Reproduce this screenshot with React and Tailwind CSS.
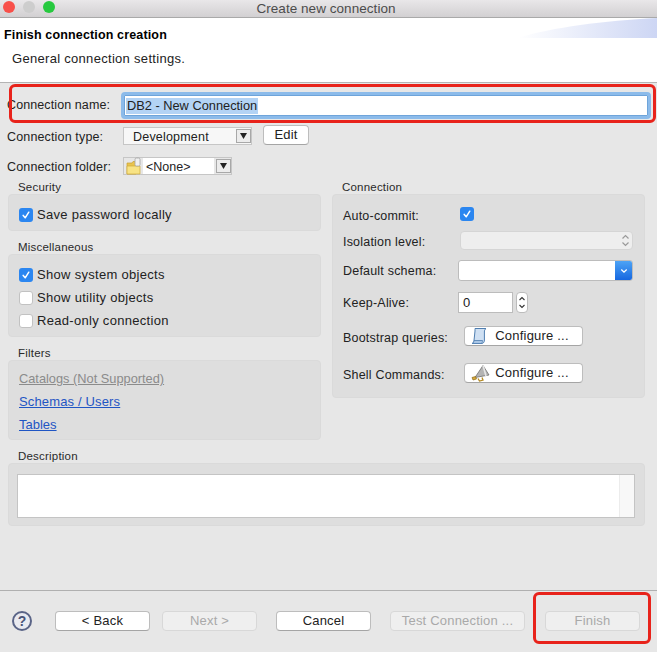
import React from "react";

function Check({ on }) {
  return on ? (
    <span className="w-[14px] h-[14px] shrink-0 rounded-[3px] bg-[#2b86f0] flex items-center justify-center">
      <svg width="10" height="10" viewBox="0 0 10 10" fill="none" stroke="#fff" strokeWidth="1.5" strokeLinecap="round" strokeLinejoin="round">
        <path d="M2.2 5.4 4.2 7.8 7.8 2.2" />
      </svg>
    </span>
  ) : (
    <span className="w-[14px] h-[14px] shrink-0 rounded-[3px] bg-white border border-[#c2c2c2]" />
  );
}

function ArrowBox() {
  return (
    <span className="w-[15px] h-[14px] border border-[#a8a8a8] bg-[#ececec] flex items-center justify-center">
      <svg width="7" height="6" viewBox="0 0 7 6">
        <path d="M0 0h7L3.5 6z" fill="#222" />
      </svg>
    </span>
  );
}

function Group({ title, className, children }) {
  return (
    <div className={className}>
      <div className="h-[14px] pl-[10px] text-[11.5px] leading-[14px] tracking-[0.2px] text-[#2a2a2a]">{title}</div>
      <div className="rounded-[4px] bg-[#dedede] border border-[#dadada]">{children}</div>
    </div>
  );
}

function CheckRow({ on, children }) {
  return (
    <div className="h-[23px] flex items-center gap-[4px] text-[13px] tracking-[0.3px] text-[#222]">
      <Check on={on} />
      <span>{children}</span>
    </div>
  );
}

function Btn({ children, off, className }) {
  return (
    <button
      className={
        "h-[20px] rounded-[4px] text-[13px] tracking-[0.2px] flex items-center justify-center " +
        (off
          ? "bg-[#efefef] border border-[#d8d8d8] text-[#a9a9a9] "
          : "bg-white border border-[#bdbdbd] border-b-[#a5a5a5] text-[#222] ") +
        className
      }
    >
      {children}
    </button>
  );
}

function ScrollIcon() {
  return (
    <svg width="17" height="18" viewBox="0 0 17 18" fill="none">
      <path d="M4 1.5h11c-1.3 1-1.6 2-1.6 3.5v8c0 1.6-.7 3-2 3.5H1.2c1.2-.7 1.7-1.6 1.8-3L4 4c0-1 0-2 0-2.500z" fill="#cfe0f3" stroke="#4f7eb0" strokeWidth="1" strokeLinejoin="round" />
      <path d="M1.2 16.500c1-.4 1.700-1.500 1.800-3h8.500c0 1.500-.3 2.500-1.200 3z" fill="#a9c6e6" stroke="#4f7eb0" strokeWidth=".8" />
    </svg>
  );
}

function HornIcon() {
  return (
    <svg width="20" height="18" viewBox="0 0 20 18" fill="none">
      <path d="M12 1.500 18 11 4 13.500z" fill="#b4b4b4" stroke="#6f6f6f" strokeWidth=".8" strokeLinejoin="round" />
      <path d="M12 1.500 15 12" stroke="#e6e6e6" strokeWidth="1.600" />
      <path d="M1 13.500 4.500 12.500 5.500 15 2 16z" fill="#d8a93a" stroke="#8d6a17" strokeWidth=".7" />
      <path d="M7 14.500 8.500 17 12 16 11 13.500" fill="none" stroke="#b58a22" strokeWidth="1.300" />
    </svg>
  );
}

function FolderIcon() {
  return (
    <svg width="16" height="18" viewBox="0 0 16 18" fill="none">
      <path d="M1 6h5l1-1.500h3V17H1z" fill="#e9c44e" stroke="#c9a233" strokeWidth=".7" />
      <path d="M1 9h13v8H1z" fill="#f8e384" stroke="#cfa93a" strokeWidth=".7" />
      <rect x="9" y="1" width="5" height="8" rx="1.500" fill="#f1f1f1" stroke="#a3a3a3" strokeWidth=".8" />
    </svg>
  );
}

export default function App() {
  return (
    <div className="relative w-[657px] h-[652px] flex flex-col overflow-hidden bg-[#e7e7e7] text-[13px] text-[#222] font-['Liberation_Sans',Arial,sans-serif]">
      {/* title bar */}
      <div className="relative h-[18px] shrink-0 flex items-center justify-center bg-gradient-to-b from-[#e9e7e9] to-[#d2d0d2] border-b border-[#a9a9a9]">
        <div className="absolute left-[3px] top-[1px] flex gap-[8px]">
          <span className="w-[12px] h-[12px] rounded-full bg-[#f8504a]" />
          <span className="w-[12px] h-[12px] rounded-full bg-[#cdcdcd]" />
          <span className="w-[12px] h-[12px] rounded-full bg-[#27c93f]" />
        </div>
        <span className="pr-[5px] text-[13.500px] leading-none text-[#4c4c4c] tracking-[0.05px]">Create new connection</span>
      </div>

      {/* header */}
      <div className="relative h-[65px] shrink-0 bg-white border-b border-[#b4b4b4] pl-[4px] pt-[10px]">
        <svg className="absolute right-0 top-0" width="139" height="21" viewBox="0 0 139 21">
          <defs>
            <linearGradient id="swoosh" x1="0" x2="1" y1="0" y2="0">
              <stop offset="0" stopColor="#ffffff" />
              <stop offset="1" stopColor="#cdd6f4" />
            </linearGradient>
          </defs>
          <path d="M0 20C35 9 85 3 139 0v20z" fill="url(#swoosh)" />
        </svg>
        <div className="text-[12.500px] leading-[15px] font-bold tracking-[0.15px] text-black">Finish connection creation</div>
        <div className="mt-[8px] pl-[8px] text-[13px] leading-[15px] tracking-[0.3px] text-[#222]">General connection settings.</div>
      </div>

      {/* form */}
      <div className="flex-1 px-[7px] pt-[9px]">
        <div className="flex items-center h-[27px]">
          <span className="w-[114px] text-[12.500px] tracking-[0.1px]">Connection name:</span>
          <div className="flex-1 mr-[-1px] h-[27px] border-[3px] border-[#8cbbea] rounded-[4px] bg-white flex items-center pl-[2px] shadow-[inset_0_0_0_1px_#6ea4da]">
            <span className="bg-[#b3d3f5] text-[12.800px] leading-[16px] px-[1px]">DB2 - New Connection</span>
          </div>
        </div>

        <div className="mt-[6px] flex items-center h-[22px]">
          <span className="w-[116px] pt-[2px] text-[12.500px] tracking-[0.15px]">Connection type:</span>
          <div className="w-[129px] h-[18px] border border-[#c6c6c6] bg-[#f7f7f7] flex items-center justify-between pl-[9px]">
            <span className="pt-[2px] text-[12.500px] tracking-[0.2px]">Development</span>
            <ArrowBox />
          </div>
          <Btn className="self-start ml-[11px] w-[46px]">Edit</Btn>
        </div>

        <div className="mt-[9px] flex items-center h-[20px]">
          <span className="w-[116px] pt-[2px] text-[12.500px] tracking-[0.15px]">Connection folder:</span>
          <div className="w-[109px] h-[18px] border border-[#c6c6c6] flex items-center">
            <span className="w-[19px] flex justify-center"><FolderIcon /></span>
            <span className="w-[71px] h-full bg-white pl-[3px] pt-[1px] leading-[17px] text-[12.500px]">&lt;None&gt;</span>
            <span className="ml-auto"><ArrowBox /></span>
          </div>
        </div>

        <div className="mt-[4px] flex gap-[11px]">
          <div className="ml-[1px] w-[313px]">
            <Group title="Security">
              <div className="px-[10px] pt-[8px] pb-[4px]">
                <CheckRow on>Save password locally</CheckRow>
              </div>
            </Group>
            <Group title="Miscellaneous" className="mt-[9px]">
              <div className="px-[10px] pt-[8px] pb-[4px]">
                <CheckRow on>Show system objects</CheckRow>
                <CheckRow>Show utility objects</CheckRow>
                <CheckRow>Read-only connection</CheckRow>
              </div>
            </Group>
            <Group title="Filters" className="mt-[9px]">
              <div className="px-[10px] pt-[6px] pb-[3px] text-[13px] leading-[23px]">
                <div className="underline text-[#8b8b8b] text-[12.800px]">Catalogs (Not Supported)</div>
                <div className="underline text-[#1f55c4] tracking-[0.15px]">Schemas / Users</div>
                <div className="underline text-[#1f55c4]">Tables</div>
              </div>
            </Group>
          </div>

          <Group title="Connection" className="w-[313px]">
            <div className="pl-[10px] pr-[11px] pt-[12px] pb-[14px] text-[12.500px] tracking-[0.2px]">
              <div className="flex items-center h-[14px]">
                <span className="w-[117px] pt-[4px]">Auto-commit:</span>
                <Check on />
              </div>
              <div className="mt-[10px] flex items-center h-[19px]">
                <span className="w-[117px] pt-[3px]">Isolation level:</span>
                <div className="flex-1 h-[19px] rounded-[4px] bg-[#eeeeee] border border-[#d5d5d5] flex items-center justify-end pr-[2px]">
                  <svg width="9" height="13" viewBox="0 0 9 13" fill="none" stroke="#9a9a9a" strokeWidth="1.200">
                    <path d="M1.500 4.500 4.500 1.500 7.500 4.500M1.500 8.500 4.500 11.500 7.500 8.500" />
                  </svg>
                </div>
              </div>
              <div className="mt-[10px] flex items-center h-[21px]">
                <span className="w-[115px] pt-[2px]">Default schema:</span>
                <div className="flex-1 h-[21px] flex rounded-[3px] overflow-hidden border border-[#bcbcbc] bg-white">
                  <span className="flex-1" />
                  <span className="w-[17px] bg-gradient-to-b from-[#4da3f5] to-[#1667e0] flex items-center justify-center">
                    <svg width="8" height="6" viewBox="0 0 8 6" fill="none" stroke="#fff" strokeWidth="1.300">
                      <path d="M1.300 1.500 4 4.200 6.700 1.500" />
                    </svg>
                  </span>
                </div>
              </div>
              <div className="mt-[11px] flex items-center h-[21px]">
                <span className="w-[115px] pt-[2px]">Keep-Alive:</span>
                <div className="w-[55px] h-[21px] bg-white border border-[#bcbcbc] pl-[4px] text-[13px] leading-[20px]">0</div>
                <div className="ml-[3px] w-[12px] h-[21px] rounded-[4px] bg-white border border-[#bcbcbc] flex items-center justify-center">
                  <svg width="8" height="15" viewBox="0 0 8 15" fill="none" stroke="#333" strokeWidth="1.100">
                    <path d="M1.500 5 4 2.500 6.500 5M1.500 10 4 12.500 6.500 10" />
                  </svg>
                </div>
              </div>
              <div className="mt-[13px] flex items-center h-[20px]">
                <span className="w-[121px] pt-[5px]">Bootstrap queries:</span>
                <Btn className="w-[119px] gap-[7px] pr-[7px]">
                  <ScrollIcon />
                  <span>Configure ...</span>
                </Btn>
              </div>
              <div className="mt-[17px] flex items-center h-[20px]">
                <span className="w-[121px] pt-[5px]">Shell Commands:</span>
                <Btn className="w-[119px] gap-[4px] pr-[7px]">
                  <HornIcon />
                  <span>Configure ...</span>
                </Btn>
              </div>
            </div>
          </Group>
        </div>

        <Group title="Description" className="mt-[9px] ml-[1px] w-[637px]">
          <div className="px-[8px] pt-[10px] pb-[7px]">
            <div className="h-[44px] w-[618px] border border-[#c4c4c4] bg-white flex justify-end">
              <span className="w-[15px] bg-[#f8f8f8] border-l border-[#ececec]" />
            </div>
          </div>
        </Group>
      </div>

      {/* buttons */}
      <div className="h-[62px] shrink-0 border-t border-[#b0b0b0] flex items-center pl-[12px] pb-[1px]">
        <span className="w-[20px] h-[20px] rounded-full border-2 border-[#5a6487] text-[#4a5478] bg-[#e9eaf0] flex items-center justify-center text-[14px] font-bold leading-none">?</span>
        <Btn className="ml-[23px] w-[95px]">&lt; Back</Btn>
        <Btn off className="ml-[12px] w-[95px]">Next &gt;</Btn>
        <Btn className="ml-[19px] w-[95px]">Cancel</Btn>
        <Btn off className="ml-[19px] w-[135px]">Test Connection ...</Btn>
        <Btn off className="ml-[20px] w-[95px]">Finish</Btn>
      </div>

      {/* red highlights */}
      <div className="absolute left-[9px] top-[84px] w-[647px] h-[39px] border-[3px] border-[#e8231b] rounded-[6px]" />
      <div className="absolute left-[533px] top-[592px] w-[118px] h-[52px] border-[3px] border-[#e8231b] rounded-[6px]" />
    </div>
  );
}
